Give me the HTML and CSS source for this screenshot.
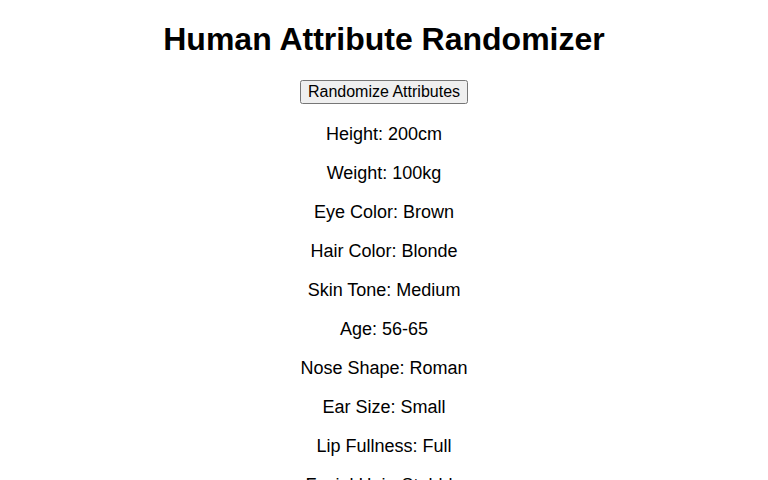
FILE: index.html
```html
<!DOCTYPE html>
<html>
	<head>
		<meta charset="utf-8">
		<title>Human Attribute Randomizer</title>
		<link rel="stylesheet" href="styles.css">
	</head>
	<body>
		<h1>Human Attribute Randomizer</h1>
		<button id="randomize">Randomize Attributes</button>
		<div id="attributes">
			<p id="height">Height: 200cm</p>
			<p id="weight">Weight: 100kg</p>
			<p id="eyeColor">Eye Color: Brown</p>
			<p id="hairColor">Hair Color: Blonde</p>
			<p id="skinTone">Skin Tone: Medium</p>
			<p id="age">Age: 56-65</p>
			<p id="noseShape">Nose Shape: Roman</p>
			<p id="earSize">Ear Size: Small</p>
			<p id="lipFullness">Lip Fullness: Full</p>
			<p id="facialHair">Facial Hair: Stubble</p>
		</div>
	</body>
</html>
```

FILE: styles.css
```css
body{
	margin: 0;
	font-family: "Liberation Sans", Arial, sans-serif;
	text-align: center;
	color: #000;
	background-color: #fff;
}
h1{
	font-size: 32px;
}
button{
	font-family: "Liberation Sans", Arial, sans-serif;
	font-size: 16px;
}
#attributes{
	margin-top: 20px;
}
#attributes p{
	font-size: 18px;
}
```
